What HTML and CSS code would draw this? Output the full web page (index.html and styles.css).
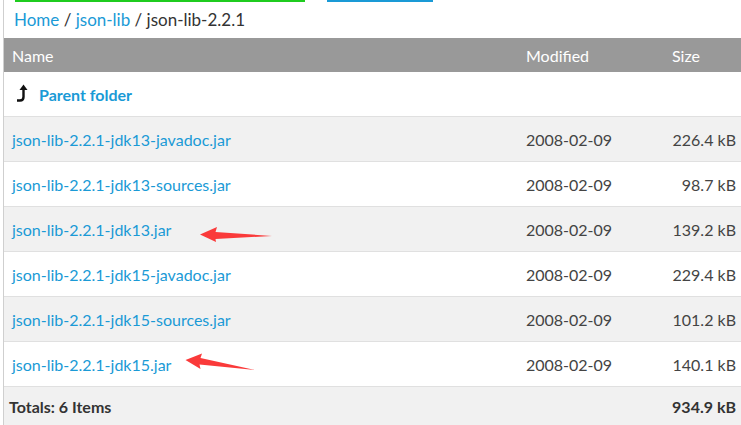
FILE: index.html
```html
<!DOCTYPE html>
<html>
<head>
<meta charset="utf-8">
<link rel="stylesheet" href="styles.css">
</head>
<body>
<div class="page">
  <div class="topbars">
    <span class="bar green"></span>
    <span class="bar blue"></span>
  </div>
  <div class="crumbs"><a href="#">Home</a> / <a href="#">json-lib</a> / json-lib-2.2.1</div>
  <table class="files">
    <colgroup>
      <col class="w-name">
      <col class="w-mod">
      <col class="w-size">
    </colgroup>
    <thead>
      <tr><th class="c-name">Name</th><th class="c-mod">Modified</th><th class="c-size">Size</th></tr>
    </thead>
    <tbody>
      <tr class="parent">
        <td colspan="3">
          <div class="parent-cell">
            <svg class="up" viewBox="0 0 12 18" width="12" height="18"><path d="M1 16.5 H4 Q7.5 16.5 7.5 13 V5" fill="none" stroke="#111" stroke-width="2.4"/><polygon points="7.5,0.5 11.5,6 3.5,6" fill="#111"/></svg>
            <a href="#" class="bold">Parent folder</a>
          </div>
        </td>
      </tr>
      <tr class="alt"><td class="c-name"><a href="#">json-lib-2.2.1-jdk13-javadoc.jar</a></td><td class="c-mod">2008-02-09</td><td class="c-size">226.4 kB</td></tr>
      <tr><td class="c-name"><a href="#">json-lib-2.2.1-jdk13-sources.jar</a></td><td class="c-mod">2008-02-09</td><td class="c-size">98.7 kB</td></tr>
      <tr class="alt"><td class="c-name"><a href="#">json-lib-2.2.1-jdk13.jar</a></td><td class="c-mod">2008-02-09</td><td class="c-size">139.2 kB</td></tr>
      <tr><td class="c-name"><a href="#">json-lib-2.2.1-jdk15-javadoc.jar</a></td><td class="c-mod">2008-02-09</td><td class="c-size">229.4 kB</td></tr>
      <tr class="alt"><td class="c-name"><a href="#">json-lib-2.2.1-jdk15-sources.jar</a></td><td class="c-mod">2008-02-09</td><td class="c-size">101.2 kB</td></tr>
      <tr><td class="c-name"><a href="#">json-lib-2.2.1-jdk15.jar</a></td><td class="c-mod">2008-02-09</td><td class="c-size">140.1 kB</td></tr>
    </tbody>
    <tfoot>
      <tr><td class="c-total" colspan="2">Totals: 6 Items</td><td class="c-size total">934.9 kB</td></tr>
    </tfoot>
  </table>
  <svg class="arrows" width="741" height="425" viewBox="0 0 741 425">
    <polygon points="200,234.5 217,227 215.5,232 272,236 215.5,239 216,242" fill="#fa3a3a"/>
    <polygon points="185.5,360 202,353.5 200.5,358 255,370 199.5,364.5 200.5,369" fill="#fa3a3a"/>
  </svg>
</div>
</body>
</html>
```
FILE: styles.css
```css
html, body {
  margin: 0;
  padding: 0;
  background: #fff;
  overflow: hidden;
}
body {
  font-family: Lato, "Open Sans", sans-serif;
  color: #333;
}
.page {
  position: relative;
  margin-left: 3px;
  border-left: 1px solid #cfcfcf;
  width: 740px;
  height: 425px;
}
.topbars {
  display: flex;
  height: 2px;
}
.bar {
  display: block;
  height: 2px;
}
.bar.green {
  margin-left: 11px;
  width: 290px;
  background: #1fcc1f;
}
.bar.blue {
  margin-left: 22px;
  width: 106px;
  background: #1a9ad6;
}
a {
  color: #1a9ad6;
  text-decoration: none;
}
.bold {
  font-weight: 700;
}
.crumbs {
  height: 36px;
  line-height: 35px;
  padding-left: 10px;
  font-size: 17px;
  color: #333;
}
.files {
  border-collapse: collapse;
  width: 740px;
  table-layout: fixed;
  font-size: 16px;
}
.w-name { width: 514px; }
.w-mod { width: 146px; }
.w-size { width: 80px; }
.files th {
  background: #999;
  color: #fff;
  font-weight: 400;
  text-align: left;
  height: 34px;
  padding: 0 0 0 8px;
}
.files td {
  height: 44px;
  padding: 0 0 0 8px;
  border-top: 1px solid #e0e0e0;
  white-space: nowrap;
}
.files tbody tr:first-child td {
  border-top: none;
  height: 44px;
}
.c-mod {
  color: #444;
}
td.c-size {
  text-align: right;
  padding: 0 8px 0 0;
  color: #444;
}
.alt td {
  background: #f1f1f1;
}
.parent-cell {
  display: flex;
  align-items: center;
  gap: 11px;
  padding-left: 4px;
}
.up {
  display: block;
  margin-top: -2px;
}
.files tfoot td {
  background: #f1f1f1;
  height: 38px;
  font-weight: 700;
  color: #333;
}
.files tfoot td.c-total {
  padding-left: 5px;
}
.arrows {
  position: absolute;
  left: -4px;
  top: 0;
  pointer-events: none;
}
```
